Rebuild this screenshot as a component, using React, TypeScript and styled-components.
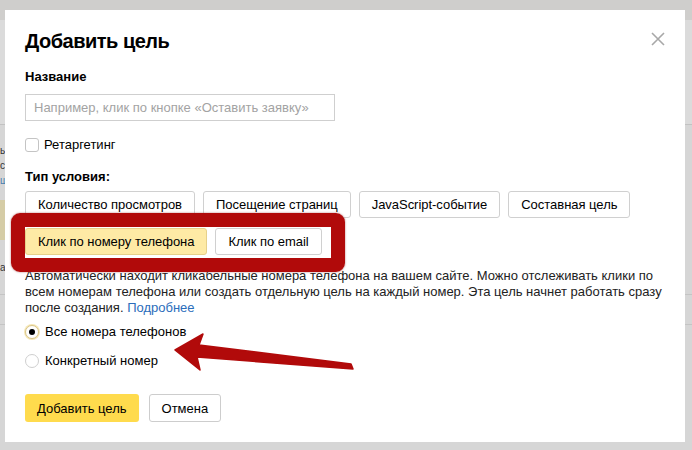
import React from "react";
import styled, { createGlobalStyle } from "styled-components";

const GlobalStyle = createGlobalStyle`
  html, body { margin: 0; padding: 0; }
  body {
    background: #d4d4d4;
    font-family: "Liberation Sans", Arial, sans-serif;
    color: #000;
  }
  * { box-sizing: border-box; }
`;

const Screen = styled.div`
  position: relative;
  width: 692px;
  height: 450px;
  overflow: hidden;
  background: #d4d4d4;
`;

/* ---------- dimmed page behind the modal ---------- */
const BackPage = styled.div`
  position: absolute;
  inset: 0;
  display: flex;
  flex-direction: column;
`;

const TopBar = styled.div`
  height: 20px;
  background: #cfcecc;
`;

const HeadPanel = styled.div`
  height: 105px;
  background: #dbdbdb;
  border-bottom: 1px solid #c2c2c2;
`;

const BackBody = styled.div`
  flex: 1;
  display: flex;
  flex-direction: column;
  background: #d6d6d6;
`;

const BackRow = styled.div<{ $h: number; $line?: boolean }>`
  height: ${(p) => p.$h}px;
  border-bottom: ${(p) => (p.$line ? "1px solid #c4c4c4" : "none")};
  display: flex;
  flex-direction: column;
  justify-content: center;
`;

const SideStrip = styled.div`
  width: 6px;
  height: 100%;
  background: #d5cca6;
`;

const Fragment = styled.div<{ $color?: string }>`
  width: 6px;
  font-size: 10px;
  line-height: 15px;
  color: ${(p) => p.$color ?? "#333"};
`;

/* ---------- modal ---------- */
const Modal = styled.div`
  position: absolute;
  left: 5px;
  top: 10px;
  width: 680px;
  height: 432px;
  background: #fff;
  padding: 19px 20px 0 20px;
  display: flex;
  flex-direction: column;
`;

const TitleRow = styled.div`
  display: flex;
  justify-content: space-between;
  align-items: flex-start;
`;

const Title = styled.h1`
  margin: 0;
  font-family: "Liberation Sans", Arial, sans-serif;
  font-weight: bold;
  font-size: 20px;
  line-height: 24px;
  letter-spacing: -0.5px;
  color: #000;
`;

const CloseButton = styled.button`
  border: none;
  background: none;
  padding: 0;
  margin: 3px 0 0 0;
  width: 14px;
  height: 14px;
  display: flex;
  cursor: pointer;
`;

const Label = styled.div<{ $mt: number }>`
  margin-top: ${(p) => p.$mt}px;
  font-weight: bold;
  font-size: 13px;
  line-height: 16px;
  color: #000;
`;

const Input = styled.input`
  margin-top: 9px;
  width: 310px;
  height: 27px;
  border: 1px solid #cfcfcf;
  padding: 0 8px;
  font-family: "Liberation Sans", Arial, sans-serif;
  font-size: 13px;
  color: #000;
  outline: none;
  &::placeholder { color: #a3a3a3; }
`;

const CheckRow = styled.label`
  margin-top: 16px;
  display: flex;
  align-items: center;
  gap: 5px;
  font-size: 13px;
  line-height: 16px;
  color: #000;
`;

const CheckBox = styled.span`
  width: 14px;
  height: 14px;
  border: 1px solid #c4c4c4;
  border-radius: 3px;
  background: #fff;
`;

const ButtonGrid = styled.div`
  margin-top: 6px;
  display: flex;
  flex-wrap: wrap;
  gap: 10px 8px;
  width: 620px;
`;

const TypeButton = styled.button<{ $active?: boolean }>`
  height: 27px;
  padding: 0 12px;
  border-radius: 3px;
  border: 1px solid ${(p) => (p.$active ? "#e6d08a" : "#d0d0d0")};
  background: ${(p) => (p.$active ? "#feeaa5" : "#fff")};
  font-family: "Liberation Sans", Arial, sans-serif;
  font-size: 13px;
  letter-spacing: -0.03px;
  color: #000;
  cursor: pointer;
`;

const Description = styled.p`
  margin: 13px 0 0 0;
  font-size: 13px;
  line-height: 16px;
  color: #222;
`;

const Link = styled.a`
  color: #2b6dbb;
  text-decoration: none;
`;

const RadioGroup = styled.div`
  margin-top: 8px;
  display: flex;
  flex-direction: column;
  gap: 13px;
`;

const RadioRow = styled.label`
  display: flex;
  align-items: center;
  gap: 6px;
  font-size: 13px;
  line-height: 16px;
  color: #000;
`;

const RadioCircle = styled.span<{ $checked?: boolean }>`
  width: 14px;
  height: 14px;
  border-radius: 50%;
  border: 1px solid ${(p) => (p.$checked ? "#d9c487" : "#cfcfcf")};
  background: #fff;
  display: flex;
  align-items: center;
  justify-content: center;
  box-shadow: ${(p) => (p.$checked ? "0 0 0 1px #f5e7b6" : "none")};
  &::after {
    content: "";
    width: 6px;
    height: 6px;
    border-radius: 50%;
    background: #000;
    display: ${(p) => (p.$checked ? "block" : "none")};
  }
`;

const Footer = styled.div`
  margin-top: 25px;
  display: flex;
  gap: 10px;
`;

const PrimaryButton = styled.button`
  height: 28px;
  padding: 0 12px;
  border: none;
  border-radius: 3px;
  background: #ffdb4d;
  font-family: "Liberation Sans", Arial, sans-serif;
  font-size: 13px;
  color: #000;
  cursor: pointer;
`;

const SecondaryButton = styled.button`
  height: 28px;
  padding: 0 12px;
  border: 1px solid #cdcdcd;
  border-radius: 3px;
  background: #fff;
  font-family: "Liberation Sans", Arial, sans-serif;
  font-size: 13px;
  color: #000;
  cursor: pointer;
`;

/* ---------- annotations over the modal ---------- */
const HighlightFrame = styled.div`
  position: absolute;
  left: 11px;
  top: 213px;
  width: 334px;
  height: 59px;
  border: 14px solid #b10a0a;
  border-radius: 9px;
  box-shadow: 0 0 2px rgba(120, 0, 0, 0.6);
  pointer-events: none;
`;

const ArrowSvg = styled.svg`
  position: absolute;
  left: 0;
  top: 0;
  pointer-events: none;
`;

export default function App() {
  return (
    <>
      <GlobalStyle />
      <Screen>
        <BackPage>
          <TopBar />
          <HeadPanel />
          <BackBody>
            <BackRow $h={18} />
            <BackRow $h={45}>
              <Fragment>ь</Fragment>
              <Fragment>с</Fragment>
              <Fragment $color="#4a7fb0">ш</Fragment>
            </BackRow>
            <BackRow $h={12} />
            <BackRow $h={40}>
              <SideStrip />
            </BackRow>
            <BackRow $h={55} $line>
              <Fragment>а</Fragment>
            </BackRow>
            <BackRow $h={30} $line />
            <BackRow $h={100} />
          </BackBody>
        </BackPage>

        <Modal>
          <TitleRow>
            <Title>Добавить цель</Title>
            <CloseButton aria-label="Закрыть">
              <svg width="14" height="14" viewBox="0 0 14 14">
                <path d="M1 1 L13 13 M13 1 L1 13" stroke="#a8a8a8" strokeWidth="1.6" />
              </svg>
            </CloseButton>
          </TitleRow>

          <Label $mt={16}>Название</Label>
          <Input placeholder="Например, клик по кнопке «Оставить заявку»" />

          <CheckRow>
            <CheckBox />
            Ретаргетинг
          </CheckRow>

          <Label $mt={16}>Тип условия:</Label>
          <ButtonGrid>
            <TypeButton>Количество просмотров</TypeButton>
            <TypeButton>Посещение страниц</TypeButton>
            <TypeButton>JavaScript-событие</TypeButton>
            <TypeButton>Составная цель</TypeButton>
            <TypeButton $active>Клик по номеру телефона</TypeButton>
            <TypeButton>Клик по email</TypeButton>
          </ButtonGrid>

          <Description>
            Автоматически находит кликабельные номера телефона на вашем сайте. Можно отслеживать клики по
            <br />
            всем номерам телефона или создать отдельную цель на каждый номер. Эта цель начнет работать сразу
            <br />
            после создания. <Link href="#">Подробнее</Link>
          </Description>

          <RadioGroup>
            <RadioRow>
              <RadioCircle $checked />
              Все номера телефонов
            </RadioRow>
            <RadioRow>
              <RadioCircle />
              Конкретный номер
            </RadioRow>
          </RadioGroup>

          <Footer>
            <PrimaryButton>Добавить цель</PrimaryButton>
            <SecondaryButton>Отмена</SecondaryButton>
          </Footer>
        </Modal>

        <HighlightFrame />

        <ArrowSvg width="692" height="450" viewBox="0 0 692 450">
          <polygon
            points="175,350 203,334 199,345 351,364 353,369 197,357 200,370"
            fill="#b10a0a"
            stroke="#b10a0a"
            strokeWidth="1.5"
            strokeLinejoin="round"
          />
        </ArrowSvg>
      </Screen>
    </>
  );
}
